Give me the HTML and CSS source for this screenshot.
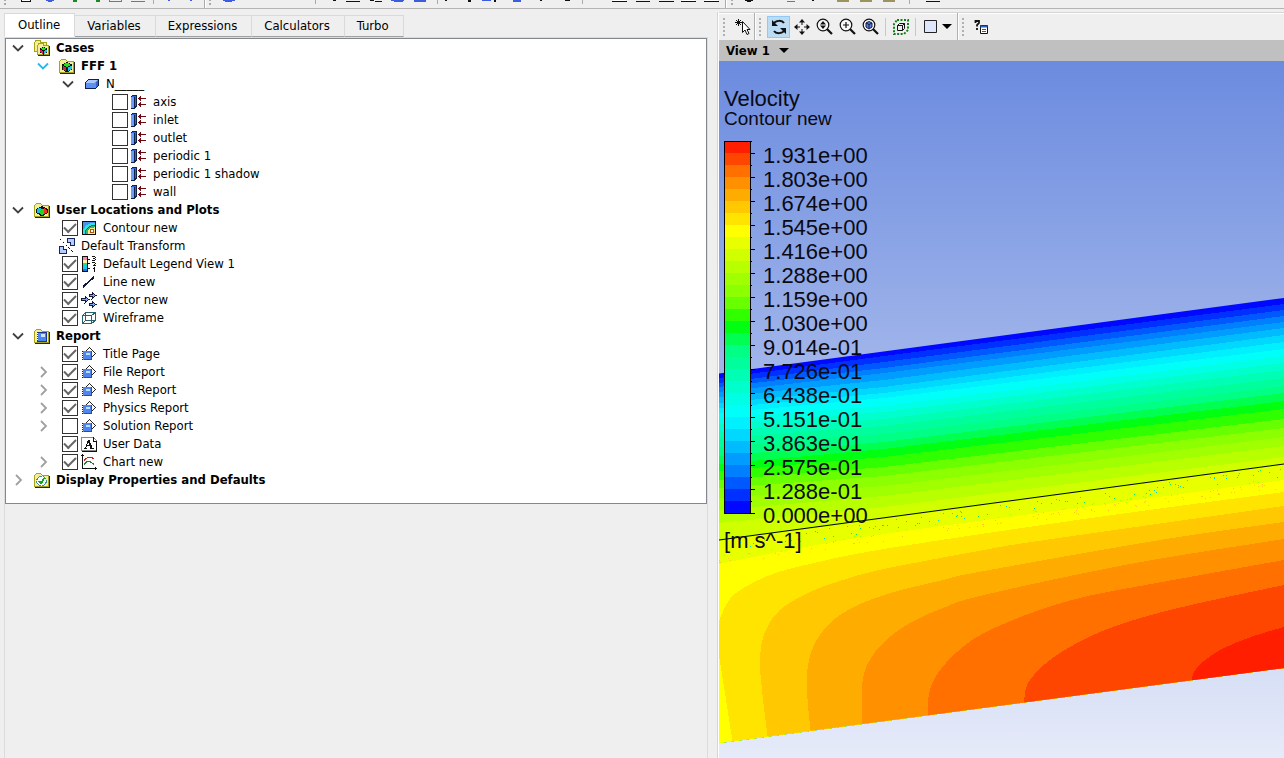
FILE: index.html
```html
<!DOCTYPE html>
<html lang="en">
<head>
<meta charset="utf-8">
<title>CFD results viewer</title>
<link rel="stylesheet" href="styles.css">
</head>
<body>
<svg class="symbols" aria-hidden="true">
  <symbol id="folder" viewBox="0 0 16 16">
    <path d="M.5 14.500V3.500L2.500 1.500H6.500L8.500 3.500H14.500V14.500Z" fill="#f3ed9c" stroke="#a8a418"/>
    <path d="M1 15.500H15.500V4" fill="none" stroke="#222"/>
  </symbol>
  <symbol id="cube" viewBox="0 0 16 16">
    <path d="M1 5 8 1 15 5V11L8 15.500 1 11Z" fill="#111"/>
    <path d="M3 5 8 2 13 5 8 8Z" fill="#1ce41c"/>
    <path d="M2 6 7 9V14L2 10.500Z" fill="#f0125a"/>
    <path d="M9 9 14 6V10.500L9 14Z" fill="#18c8f0"/>
  </symbol>
  <symbol id="i-cases" viewBox="0 0 16 16">
    <path d="M.5 11.500V2.500L2 .5H6L7 2.500H12V11.500Z" fill="#f3ed9c" stroke="#a8a418"/>
    <path d="M3.500 14.500V5.500L5 3.500H9L10 5.500H14.500V14.500Z" fill="#f3ed9c" stroke="#a8a418"/>
    <path d="M4 15.500H15.500V6" fill="none" stroke="#222"/>
    <use href="#cube" x="5" y="6" width="9" height="9"/>
  </symbol>
  <symbol id="i-case" viewBox="0 0 16 16"><use href="#folder"/><use href="#cube" x="2" y="3" width="12" height="12"/></symbol>
  <symbol id="i-locations" viewBox="0 0 16 16">
    <use href="#folder"/>
    <path d="M2 7 8 4 13.500 7V11L8 14.500 2 11Z" fill="#111"/>
    <path d="M3 7 7 5.500V11.500L3 10.500Z" fill="#18bdf0"/><path d="M6 7H10V11L8 13.500 6 11Z" fill="#20d820"/><path d="M10 6 13 8V10.500L10 12Z" fill="#ef3024"/>
  </symbol>
  <symbol id="i-report" viewBox="0 0 16 16">
    <use href="#folder"/><path d="M3.500 4.500H12.500V13.500H3.500Z" fill="#4c86ee" stroke="#1c3690"/>
    <path d="M7 6H11V9H7Z" fill="#cfe4ff"/><path d="M3.500 5V13" stroke="#fff" stroke-dasharray="1 1"/>
  </symbol>
  <symbol id="i-display" viewBox="0 0 16 16">
    <use href="#folder"/><circle cx="7.500" cy="9" r="4.800" fill="#f4fcff" stroke="#46889a" stroke-dasharray="3 1"/>
    <path d="M5 9 7 11.500 10 6" fill="none" stroke="#10a818" stroke-width="1.800"/>
  </symbol>
  <symbol id="i-domain" viewBox="0 0 16 16">
    <path d="M1.500 6.500 5 3.500H14.500V9.500L11.500 12.500H1.500Z" fill="#5b91f5" stroke="#10204c"/>
    <path d="M2 6.500 5 4H14L11 6.500Z" fill="#a9c8ff"/><path d="M11.500 6.500V12L14 9.500V4.500Z" fill="#3465c8"/>
  </symbol>
  <symbol id="i-boundary" viewBox="0 0 16 16">
    <path d="M0 2.500 1.500 1.500H5.500V12L3.500 14.500H0Z" fill="#3465c8" stroke="#102450"/>
    <path d="M0 3H3V14H0Z" fill="#6d9df6"/><path d="M3.500 3V14" stroke="#102450"/>
    <path d="M8 4.500H15M8 10.500H15" stroke="#6d0b14"/><path d="M7 4.500 10 1.500V7.500ZM7 10.500 10 7.500V13.500Z" fill="#6d0b14"/>
  </symbol>
  <symbol id="i-contour" viewBox="0 0 16 16">
    <path d="M1.500 1.500H14.500V14.500H1.500Z" fill="#4a92e8" stroke="#111"/>
    <path d="M2 14C1 7 7 2 14 3V14Z" fill="#28e6e6"/><path d="M4.500 14C4 9 8 5 14 5.500V14Z" fill="#2cb878" stroke="#111" stroke-width=".6"/>
    <path d="M6.500 14C6 10 9 7 14 7.500V14Z" fill="#f9ef7c"/><path d="M9.500 9.500H12.500V12.500H9.500Z" fill="#fff" stroke="#b85018"/>
  </symbol>
  <symbol id="i-transform" viewBox="0 0 16 16">
    <path d="M8.500 .5H15.500V7.500H11.500V4.500H8.500ZM.5 8.500H4.500V11.500H7.500V15.500H.5Z" fill="#b8ccff" stroke="#15265c"/>
    <path d="M1 1 15 15" stroke="#111" stroke-width="1.300" stroke-dasharray="2 2"/>
  </symbol>
  <symbol id="i-legend" viewBox="0 0 16 16">
    <path d="M2 1H6V4H2Z" fill="#ff80b0"/><path d="M2 4H6V7H2Z" fill="#fff4a0"/><path d="M2 7H6V10H2Z" fill="#20dc90"/><path d="M2 10H6V13H2Z" fill="#18c8f4"/><path d="M2 13H6V15H2Z" fill="#2070e0"/>
    <path d="M1.500 .5H6.500V15.500H1.500ZM7 3.500H9M7 7.500H9M7 12.500H9M11 .5H14M14.500 1V2M12 2.500H14M14.500 3V4M11 4.500H14M11 6.500H14M14.500 7V8M13 8.500H14M12 9.500H15M13.500 11V16M12 12.500H13" fill="none" stroke="#111"/>
  </symbol>
  <symbol id="i-line" viewBox="0 0 16 16"><path d="M2 13 13 3" stroke="#10183c" stroke-width="1.800"/></symbol>
  <symbol id="i-vector" viewBox="0 0 16 16">
    <path d="M.5 6.500H4V4.500L8 7.500 4 10.500V8.500H.5ZM8 2.500H11V.5L15 3.500 11 6.500V4.500H8ZM8 11.500H11V9.500L15 12.500 11 15.500V13.500H8Z" fill="#82a4f0" stroke="#10183c"/>
  </symbol>
  <symbol id="i-wire" viewBox="0 0 16 16">
    <path d="M1.500 5.500H10.500V13.500H1.500ZM4.500 2.500H14.500V10.500H4.500ZM1.500 5.500 4.500 2.500M10.500 5.500 14.500 2.500M10.500 13.500 14.500 10.500M1.500 13.500 4.500 10.500" fill="none" stroke="#28606c"/>
  </symbol>
  <symbol id="i-page" viewBox="0 0 16 16">
    <path d="M5 5 8.500 1.500 14.500 7.500 9 13" fill="#fff" stroke="#222"/>
    <path d="M2 5H11V14H2Z" fill="#4c86ee"/><path d="M10.500 5V13.500H3" fill="none" stroke="#2450a8"/><path d="M5 7H9V9H5Z" fill="#c3dcff"/><path d="M1.500 5V14" stroke="#10204c" stroke-dasharray="1 1"/>
  </symbol>
  <symbol id="i-text" viewBox="0 0 16 16">
    <path d="M.5 1.500H12L15.500 4.500V14.500H.5Z" fill="#fff" stroke="#888"/><path d="M15.500 5V15.500H1M12 1V5H15" fill="none" stroke="#111"/>
    <path d="M3 12.500H6M4.500 12 7.500 4M5.500 9.500H9.500M8.500 12.500H13" fill="none" stroke="#111"/><path d="M7.500 4 10.500 12" stroke="#111" stroke-width="2"/>
  </symbol>
  <symbol id="i-chart" viewBox="0 0 16 16">
    <path d="M1.500 0V14.500H16" fill="none" stroke="#111"/><path d="M0 1.500H3M14.500 13V16" stroke="#111"/>
    <path d="M3 7C5 3 9 2 13 5" fill="none" stroke="#d02020" stroke-width="1.300"/><path d="M3 11C5 6 9 6 13 11" fill="none" stroke="#188038" stroke-width="1.300"/>
  </symbol>
  <symbol id="open" viewBox="0 0 12 12"><path d="M1 3.500 6 8.500 11 3.500" fill="none" stroke="currentColor" stroke-width="1.800"/></symbol>
  <symbol id="closed" viewBox="0 0 12 12"><path d="M4 1 9 6 4 11" fill="none" stroke="currentColor" stroke-width="1.800"/></symbol>
  <symbol id="lens" viewBox="0 0 18 18"><circle cx="7" cy="7" r="5.800" fill="#f8f8f8" stroke="#111" stroke-width="1.200"/><path d="M11 11 16 16" stroke="#111" stroke-width="2.200"/></symbol>
</svg>

<div class="strip">
  <svg class="strip-icons" height="8" aria-hidden="true">
    <g fill="#aaa"><path d="M4 0h2v1h-2zM4 3h2v2h-2zM209 0h2v1h-2zM209 3h2v2h-2zM731 0h2v1h-2zM731 3h2v2h-2z"/><path d="M153 0h1v4h-1zM315 0h1v4h-1zM437 0h1v4h-1zM582 0h1v4h-1zM909 0h1v4h-1zM204 0h1v8h-1zM725 0h1v8h-1z"/></g>
    <path fill="#fff" d="M205 0h1v8h-1zM726 0h1v8h-1zM22 0h8v1h-8zM613 0h13v1h-13zM682 0h13v1h-13zM705 0h13v1h-13z"/>
    <path fill="#111" d="M21 0h1v2h-1zM21 1h10v1h-10zM30 0h1v2h-1zM333 0h3v1h-3zM346 1h14v1h-14zM370 0h4v1h-4zM375 1h7v1h-7zM445 0h2v1h-2zM468 0h3v2h-3zM494 0h2v2h-2zM540 0h2v1h-2zM565 0h5v1h-5zM612 1h15v1h-15zM636 1h14v1h-14zM659 1h15v1h-15zM681 1h15v1h-15zM704 1h15v1h-15zM745 0h8v1h-8zM747 1h4v1h-4zM812 0h2v1h-2zM926 1h14v1h-14z"/>
    <path fill="#3c5ce0" d="M46 0h8v1h-8zM48 1h4v1h-4zM168 0h2v1h-2zM190 0h2v1h-2zM223 0h12v1h-12zM225 1h7v1h-7zM391 0h13v1h-13zM394 1h9v1h-9zM414 0h12v2h-12zM482 0h9v1h-9zM513 0h8v2h-8z"/>
    <path fill="#158a20" d="M73 0h4v2h-4zM96 0h4v2h-4z"/>
    <path fill="#777" d="M109 0h1v2h-1zM109 1h13v1h-13zM121 0h1v2h-1zM131 1h14v1h-14zM787 1h8v1h-8z"/>
    <path fill="#9b945e" d="M837 0h12v2h-12zM860 0h12v2h-12zM883 0h12v2h-12z"/>
  </svg>
</div>

<main class="workspace">
  <section class="sidebar">
    <nav class="tabs" role="tablist">
      <button class="tab active" role="tab" aria-selected="true">Outline</button>
      <button class="tab" role="tab">Variables</button>
      <button class="tab" role="tab">Expressions</button>
      <button class="tab" role="tab">Calculators</button>
      <button class="tab" role="tab">Turbo</button>
    </nav>
    <div class="panel">
      <ul class="tree">
        <li><div class="row group"><button class="toggle" aria-label="Collapse Cases"><svg><use href="#open"/></svg></button><svg class="icon"><use href="#i-cases"/></svg><span>Cases</span></div>
          <ul>
            <li><div class="row group"><button class="toggle hot" aria-label="Collapse FFF 1"><svg><use href="#open"/></svg></button><svg class="icon"><use href="#i-case"/></svg><span>FFF 1</span></div>
              <ul>
                <li><div class="row"><button class="toggle" aria-label="Collapse domain"><svg><use href="#open"/></svg></button><svg class="icon"><use href="#i-domain"/></svg><span>N_____</span></div>
                  <ul>
                    <li><label class="row leaf"><input type="checkbox"><svg class="icon"><use href="#i-boundary"/></svg><span>axis</span></label></li>
                    <li><label class="row leaf"><input type="checkbox"><svg class="icon"><use href="#i-boundary"/></svg><span>inlet</span></label></li>
                    <li><label class="row leaf"><input type="checkbox"><svg class="icon"><use href="#i-boundary"/></svg><span>outlet</span></label></li>
                    <li><label class="row leaf"><input type="checkbox"><svg class="icon"><use href="#i-boundary"/></svg><span>periodic 1</span></label></li>
                    <li><label class="row leaf"><input type="checkbox"><svg class="icon"><use href="#i-boundary"/></svg><span>periodic 1 shadow</span></label></li>
                    <li><label class="row leaf"><input type="checkbox"><svg class="icon"><use href="#i-boundary"/></svg><span>wall</span></label></li>
                  </ul>
                </li>
              </ul>
            </li>
          </ul>
        </li>
        <li><div class="row group"><button class="toggle" aria-label="Collapse User Locations and Plots"><svg><use href="#open"/></svg></button><svg class="icon"><use href="#i-locations"/></svg><span>User Locations and Plots</span></div>
          <ul>
            <li><label class="row leaf"><input type="checkbox" checked><svg class="icon"><use href="#i-contour"/></svg><span>Contour new</span></label></li>
            <li><div class="row leaf"><svg class="icon"><use href="#i-transform"/></svg><span>Default Transform</span></div></li>
            <li><label class="row leaf"><input type="checkbox" checked><svg class="icon"><use href="#i-legend"/></svg><span>Default Legend View 1</span></label></li>
            <li><label class="row leaf"><input type="checkbox" checked><svg class="icon"><use href="#i-line"/></svg><span>Line new</span></label></li>
            <li><label class="row leaf"><input type="checkbox" checked><svg class="icon"><use href="#i-vector"/></svg><span>Vector new</span></label></li>
            <li><label class="row leaf"><input type="checkbox" checked><svg class="icon"><use href="#i-wire"/></svg><span>Wireframe</span></label></li>
          </ul>
        </li>
        <li><div class="row group"><button class="toggle" aria-label="Collapse Report"><svg><use href="#open"/></svg></button><svg class="icon"><use href="#i-report"/></svg><span>Report</span></div>
          <ul>
            <li><label class="row leaf"><input type="checkbox" checked><svg class="icon"><use href="#i-page"/></svg><span>Title Page</span></label></li>
            <li class="branch"><button class="toggle shut" aria-label="Expand File Report"><svg><use href="#closed"/></svg></button><label class="row"><input type="checkbox" checked><svg class="icon"><use href="#i-page"/></svg><span>File Report</span></label></li>
            <li class="branch"><button class="toggle shut" aria-label="Expand Mesh Report"><svg><use href="#closed"/></svg></button><label class="row"><input type="checkbox" checked><svg class="icon"><use href="#i-page"/></svg><span>Mesh Report</span></label></li>
            <li class="branch"><button class="toggle shut" aria-label="Expand Physics Report"><svg><use href="#closed"/></svg></button><label class="row"><input type="checkbox" checked><svg class="icon"><use href="#i-page"/></svg><span>Physics Report</span></label></li>
            <li class="branch"><button class="toggle shut" aria-label="Expand Solution Report"><svg><use href="#closed"/></svg></button><label class="row"><input type="checkbox"><svg class="icon"><use href="#i-page"/></svg><span>Solution Report</span></label></li>
            <li><label class="row leaf"><input type="checkbox" checked><svg class="icon"><use href="#i-text"/></svg><span>User Data</span></label></li>
            <li class="branch"><button class="toggle shut" aria-label="Expand Chart new"><svg><use href="#closed"/></svg></button><label class="row"><input type="checkbox" checked><svg class="icon"><use href="#i-chart"/></svg><span>Chart new</span></label></li>
          </ul>
        </li>
        <li><div class="row group"><button class="toggle shut" aria-label="Expand Display Properties and Defaults"><svg><use href="#closed"/></svg></button><svg class="icon"><use href="#i-display"/></svg><span>Display Properties and Defaults</span></div></li>
      </ul>
    </div>
  </section>

  <section class="viewer">
    <div class="toolbar" role="toolbar">
      <div class="tools first">
        <i class="grip"></i>
        <button class="tool" aria-label="Select"><svg viewBox="0 0 18 18"><path d="M1 4.500H8M4.500 1V8M2 2 7 7M7 2 2 7" stroke="#111"/><path d="M8.500 3.500V14.500L11 12 13 16.500 15 15.500 13 11.500H16Z" fill="#fff" stroke="#111"/></svg></button>
      </div>
      <div class="tools">
        <i class="grip"></i>
        <button class="tool on" aria-label="Rotate"><svg viewBox="0 0 18 18"><path d="M3 6C6 2 12 2 14 5M15 12C12 16 6 16 4 13" fill="none" stroke="#111" stroke-width="2"/><path d="M2 2V8H8ZM16 16V10H10Z" fill="#111"/></svg></button>
        <button class="tool" aria-label="Pan"><svg viewBox="0 0 18 18"><path d="M9 2V7M9 11V16M2 9H7M11 9H16" stroke="#111"/><path d="M9 1 6 4.500H12ZM9 17 6 13.500H12ZM1 9 4.500 6V12ZM17 9 13.500 6V12Z" fill="#111"/></svg></button>
        <button class="tool" aria-label="Zoom"><svg viewBox="0 0 18 18"><use href="#lens"/><path d="M7 3 4 6.500H10ZM7 11 4 7.500H10Z" fill="#111"/></svg></button>
        <button class="tool" aria-label="Zoom box"><svg viewBox="0 0 18 18"><use href="#lens"/><path d="M4 7H10M7 4V10" stroke="#111" stroke-width="1.200"/></svg></button>
        <button class="tool" aria-label="Fit view"><svg viewBox="0 0 18 18"><use href="#lens"/><path d="M4 5 7 3.500 10 5V9L7 11 4 9Z" fill="#5c83e8" stroke="#10183c"/><path d="M4 5 7 6.500 10 5M7 6.500V10" fill="none" stroke="#10183c"/></svg></button>
        <i class="rule"></i>
        <button class="tool" aria-label="Toggle highlighting"><svg viewBox="0 0 18 18"><path d="M5 2H16V12L12 16H2V6Z" fill="none" stroke="#138018" stroke-width="2" stroke-dasharray="2 1.500"/><path d="M5.500 7.500H10.500V12.500H5.500ZM5.500 7.500 7.500 5.500H12.500V10.500L10.500 12.500M10.500 7.500 12.500 5.500" fill="none" stroke="#111"/></svg></button>
        <i class="rule"></i>
        <button class="tool" aria-label="Viewport layout"><svg viewBox="0 0 18 18"><path d="M2.500 2.500H14.500V14.500H2.500Z" fill="#dde6fb" stroke="#222"/></svg></button>
        <button class="drop" aria-label="More layouts"><i class="caret"></i></button>
      </div>
      <div class="tools last">
        <i class="grip"></i>
        <button class="tool" aria-label="Help"><svg viewBox="0 0 18 18"><path d="M2.500 5V3H6V5L4 7V8.500M4 10V12" fill="none" stroke="#111" stroke-width="1.800"/><path d="M7.500 7.500H14.500V15.500H7.500Z" fill="#fff" stroke="#111"/><path d="M7.500 8.500H14.500" stroke="#2a5cc0" stroke-width="2"/><path d="M9 11.500H13M9 13.500H13" stroke="#555"/></svg></button>
      </div>
    </div>
    <button class="viewbar">View 1 <i class="caret"></i></button>
    <div class="viewport">
      <svg id="plot" class="plot" viewBox="719 61 565 697" preserveAspectRatio="none" role="img" aria-label="Velocity contour plot">
        <defs><clipPath id="body"><path d="M719 373.500 1284 298V668L719 743Z"/></clipPath></defs>
        <g id="bands" clip-path="url(#body)" shape-rendering="crispEdges"></g>
        <g id="specks" shape-rendering="crispEdges"></g>
        <path d="M719 540 1284 464" stroke="#000" shape-rendering="crispEdges"/>
      </svg>
      <div class="legend">
        <div class="legend-title">Velocity</div>
        <div class="legend-name">Contour new</div>
        <div class="scale">
          <svg id="scale" width="32" height="373" shape-rendering="crispEdges" aria-hidden="true"></svg>
          <ol class="values">
            <li>1.931e+00</li><li>1.803e+00</li><li>1.674e+00</li><li>1.545e+00</li>
            <li>1.416e+00</li><li>1.288e+00</li><li>1.159e+00</li><li>1.030e+00</li>
            <li>9.014e-01</li><li>7.726e-01</li><li>6.438e-01</li><li>5.151e-01</li>
            <li>3.863e-01</li><li>2.575e-01</li><li>1.288e-01</li><li>0.000e+00</li>
          </ol>
        </div>
        <div class="units">[m s^-1]</div>
      </div>
    </div>
  </section>
</main>
<script src="plot.js"></script>
</body>
</html>
```

FILE: styles.css
```css
* { box-sizing: border-box; }
body {
  margin: 0;
  height: 100vh;
  display: flex;
  flex-direction: column;
  overflow: hidden;
  background: #efefef;
  color: #000;
  font: 13px/18px "DejaVu Sans Condensed", "DejaVu Sans", sans-serif;
}
button { font: inherit; color: inherit; margin: 0; padding: 0; border: 0; background: none; }
ul, ol { list-style: none; margin: 0; padding: 0; }
.symbols { position: absolute; width: 0; height: 0; }

.strip { height: 9px; flex: none; border-bottom: 1px solid #b4b4b4; }
.strip-icons { display: block; width: 100%; }

.workspace { flex: 1; min-height: 0; display: grid; grid-template-columns: 56fr 44fr; }

/* Outline pane */
.sidebar { display: flex; flex-direction: column; min-width: 0; padding: 4px 11px 0 4px; }
.tabs { display: flex; align-items: flex-end; height: 24px; }
.tab {
  height: 22px;
  padding: 0 14px 0 12px;
  border: 1px solid #d9d9d9;
  border-left: 0;
  border-bottom-color: #a0a0a0;
  line-height: 20px;
}
.tab.active { height: 24px; padding: 0 14px 0 13px; background: #fff; border-left: 1px solid #d9d9d9; border-bottom-color: #fff; }
.panel { flex: 1; border: solid #dcdcdc; border-width: 1px 1px 0; }
.tree { background: #fff; border: 1px solid #828790; padding-bottom: 14px; }
.tree ul { padding-left: 25px; }
.row { display: flex; align-items: center; height: 18px; white-space: nowrap; }
.row.leaf { padding-left: 25px; }
.row.group { font-weight: bold; }
.branch { display: flex; }
.toggle { width: 25px; height: 18px; padding-right: 2px; flex: none; display: grid; place-items: center; color: #404040; }
.toggle svg { width: 12px; height: 12px; }
.toggle.hot { color: #27b8ee; }
.toggle.shut { color: #a0a0a0; }
.icon { width: 16px; height: 16px; flex: none; margin: 0 6px 0 3px; shape-rendering: crispEdges; }
.row input {
  appearance: none;
  flex: none;
  display: grid;
  place-items: center;
  width: 16px;
  height: 16px;
  margin: 0 0 0 6px;
  border: 1px solid #333;
  background: #fff;
}
.row input:checked::after {
  content: "";
  width: 10px;
  height: 5px;
  margin-bottom: 3px;
  border: solid #666;
  border-width: 0 0 2px 2px;
  transform: rotate(-45deg);
}

/* Viewer pane */
.viewer {
  display: flex;
  flex-direction: column;
  min-width: 0;
  padding-top: 3px;
  box-shadow: inset 0 3px #efefef, -1px 12px #fff, -2px 12px #d5d5d5;
}
.toolbar { display: flex; height: 28px; flex: none; border-top: 1px solid #d5d5d5; box-shadow: inset 0 1px #fff, -1px 0 #fff, -2px 0 #d5d5d5; }
.tools { display: flex; align-items: center; padding-left: 4px; border-right: 1px solid #b0b0b0; box-shadow: 1px 0 #fff; }
.tools.last { border: 0; box-shadow: none; }
.grip { width: 2px; height: 18px; margin-right: 6px; background: repeating-linear-gradient(#b0b0b0 0 2px, transparent 2px 4px); }
.tool { width: 23px; height: 22px; display: grid; place-items: center; }
.tool svg { width: 18px; height: 18px; }
.tool.on { background: #bcdcf4; border: 1px solid #90c8f6; }
.rule { width: 1px; height: 18px; margin: 0 3px; background: #c8c8c8; }
.caret { display: block; border: solid transparent; border-width: 5px 5px 0; border-top-color: #000; }
.drop { display: grid; place-items: center start; width: 15px; height: 22px; }
.viewbar {
  display: flex;
  align-items: center;
  gap: 9px;
  height: 21px;
  flex: none;
  padding-left: 7px;
  background: #c0c0c0;
  font-weight: bold;
  box-shadow: -1px 0 #fff, -2px 0 #d5d5d5;
}
.viewport {
  position: relative;
  flex: 1;
  min-height: 0;
  overflow: hidden;
  background: linear-gradient(#6b8bdf, #e6ebf9);
}
.plot { display: block; width: 100%; height: 100%; }
.legend { position: absolute; left: 5px; top: 27px; font-family: "Liberation Sans", Arial, sans-serif; font-size: 22px; line-height: 24px; color: #0a0a14; }
.legend-title { line-height: 22px; }
.legend-name { font-size: 19px; line-height: 18px; }
.scale { display: flex; align-items: flex-start; gap: 7px; margin-top: 13px; }
.values { padding-top: 3px; }
.units { line-height: 26px; }
```

FILE: plot.js
```js
const NS = "http://www.w3.org/2000/svg";

// Colour ramp from the highest band to the lowest.
const ramp = [
  "#ff1e00", "#ff4600", "#ff7000", "#ff9000", "#ffac00", "#ffc800", "#ffe400", "#ffff00",
  "#e8ff00", "#d0ff00", "#b8ff00", "#a0ff00", "#8cff00", "#68ff00", "#30ff00", "#00ff10",
  "#00ff50", "#00ff84", "#00ff9c", "#00ffb4", "#00ffcc", "#00ffe4", "#00fff8", "#00f0ff",
  "#00d8ff", "#00bcff", "#009cff", "#0080ff", "#0058ff", "#0030ff", "#0008ff"
];

// Upper edge of each near-straight band at x = 719, 884 and 1284, lowest value first.
const edges = [
  [373, 350, 297], [378, 356, 304], [383, 362, 310], [387, 368, 316], [392, 373, 322],
  [397, 380, 328], [403, 387, 335], [408, 393, 342], [413, 398, 349], [418, 406, 356],
  [424, 412, 363], [431, 419, 370], [438, 426, 378], [447, 434, 386], [456, 442, 393],
  [464, 449, 401], [471, 457, 409], [480, 467, 419], [488, 476, 428], [498, 486, 437],
  [510, 496, 446], [523, 507, 457], [541, 519, 465]
];

// Upper edge of each curved band, right to left.
const curves = [
  [[1284, 480], [1084, 507], [884, 534], [800, 548], [719, 564]],
  [[1284, 492], [1084, 519], [884, 549], [810, 564], [773, 574], [747, 586], [730, 599], [719, 622], [718, 640], [719, 655], [725, 693], [733, 745]],
  [[1284, 506], [1045, 540], [984, 550], [884, 569], [843, 580], [810, 592], [780, 610], [765, 632], [760, 657], [762, 690], [768, 740]],
  [[1284, 522], [1160, 540], [984, 571], [943, 580], [884, 595], [843, 613], [820, 635], [809, 660], [807, 690], [811, 735]],
  [[1284, 539], [1130, 564], [984, 595], [943, 608], [910, 623], [884, 642], [868, 663], [862, 687], [862, 728]],
  [[1284, 560], [1151, 584], [1084, 597], [1034, 612], [984, 633], [957, 652], [938, 673], [930, 690], [928, 705], [929, 720]],
  [[1284, 585], [1191, 605], [1134, 620], [1091, 636], [1054, 657], [1034, 675], [1026, 688], [1024, 706]],
  [[1284, 627], [1251, 637], [1224, 648], [1204, 661], [1194, 672], [1191, 684]]
];

function add(parent, name, attrs) {
  const el = document.createElementNS(NS, name);
  for (const key in attrs) el.setAttribute(key, attrs[key]);
  parent.appendChild(el);
}

// Catmull-Rom spline through the points, as cubic segments.
function spline(pts) {
  let d = `M${pts[0]}`;
  for (let i = 0; i < pts.length - 1; i++) {
    const a = pts[i - 1] || pts[i], b = pts[i], c = pts[i + 1], e = pts[i + 2] || c;
    const p = [b[0] + (c[0] - a[0]) / 6, b[1] + (c[1] - a[1]) / 6];
    const q = [c[0] - (e[0] - b[0]) / 6, c[1] - (e[1] - b[1]) / 6];
    d += `C${p} ${q} ${c}`;
  }
  return d;
}

const bands = document.getElementById("bands");
edges.forEach(([l, m, r], i) => {
  add(bands, "path", { d: `M719 ${l} 884 ${m} 1284 ${r}V758H719Z`, fill: ramp[30 - i] });
});
curves.forEach((pts, i) => {
  add(bands, "path", { d: spline(pts) + "V758H1284Z", fill: ramp[7 - i] });
});

// Small vector glyphs scattered just below the sample line.
const specks = document.getElementById("specks");
let seed = 7;
const random = () => (seed = (seed * 16807) % 2147483647) / 2147483647;
for (let i = 0; i < 230; i++) {
  const x = Math.floor(719 + random() * 565);
  const depth = 3 + random() * 21;
  const y = Math.floor(540 - (x - 719) * 0.1345 + depth);
  const fill = depth > 17 ? "#ffc820" : depth > 13 ? "#a0ff00" : random() > 0.5 ? "#10e860" : "#10dcc0";
  add(specks, "rect", { x, y, width: 1, height: 1, fill });
}

const scale = document.getElementById("scale");
ramp.forEach((fill, i) => add(scale, "rect", { x: 0, y: i * 12, width: 27, height: 12, fill }));
add(scale, "path", { d: "M.5 .5H26.500V372.500H.5Z", fill: "none", stroke: "#000" });
for (let i = 0; i <= 31; i++) {
  add(scale, "rect", { x: 27, y: i * 12, width: i % 2 ? 4 : 1, height: 1, fill: "#000" });
}
```
